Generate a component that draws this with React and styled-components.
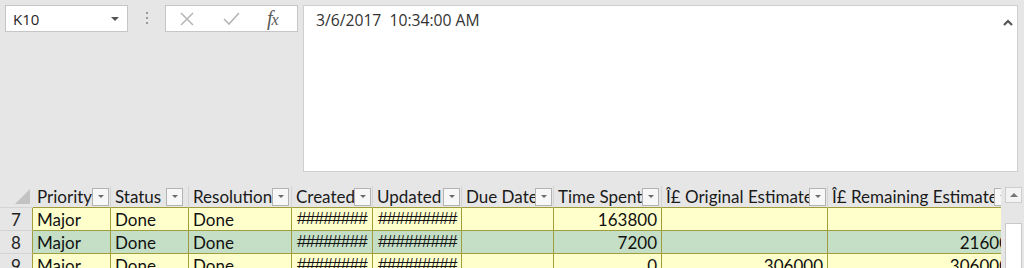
import React from 'react';
import styled, { createGlobalStyle } from 'styled-components';

const GlobalStyle = createGlobalStyle`
    body {
        margin: 0;
        background: #e6e6e6;
    }
`;

const OLIVE = '#a09e3c';

const Window = styled.div`
    width: 1024px;
    height: 268px;
    overflow: hidden;
    background: #e6e6e6;
    color: #1f1f1f;
`;

const FormulaBar = styled.div`
    display: flex;
    align-items: flex-start;
    padding: 5px 6px 0 5px;
    font-family: "Open Sans", "Noto Sans", sans-serif;
    font-size: 15px;
`;

const NameBox = styled.div`
    box-sizing: border-box;
    width: 123px;
    height: 27px;
    display: flex;
    align-items: center;
    justify-content: space-between;
    padding: 0 8px 0 7px;
    background: #fff;
    border: 1px solid #c6c6c6;
`;

const Caret = styled.span`
    width: 0;
    height: 0;
    border-left: 4px solid transparent;
    border-right: 4px solid transparent;
    border-top: 4px solid #555;
`;

const Grip = styled.div`
    width: 37px;
    display: flex;
    flex-direction: column;
    align-items: center;
    gap: 3px;
    padding-top: 7px;
    & > i {
        width: 2px;
        height: 2px;
        background: #9a9a9a;
    }
`;

const FuncBox = styled.div`
    box-sizing: border-box;
    width: 133px;
    height: 27px;
    display: flex;
    align-items: center;
    padding-left: 14px;
    background: #fff;
    border: 1px solid #c6c6c6;
`;

const FuncIcon = styled.svg`
    flex-shrink: 0;
    margin-right: ${p => p.$gap}px;
`;

const Fx = styled.span`
    font-family: "Liberation Serif", serif;
    font-style: italic;
    font-size: 20px;
    line-height: 1;
    color: #5a5a5a;
    letter-spacing: -1px;
    margin-top: -2px;
    & > small {
        font-size: 16px;
    }
`;

const FormulaInput = styled.div`
    box-sizing: border-box;
    flex: 1;
    height: 167px;
    margin-left: 5px;
    display: flex;
    justify-content: space-between;
    align-items: flex-start;
    padding: 3px 4px 0 12px;
    background: #fff;
    border: 1px solid #cfcfcf;
`;

const Value = styled.span`
    white-space: pre;
    font-size: 15.7px;
    color: #333;
`;

const SheetArea = styled.div`
    display: flex;
    margin-top: 14px;
    font-family: Lato, "Liberation Sans", sans-serif;
    font-size: 17px;
`;

const Grid = styled.div`
    width: 1001px;
    overflow: hidden;
    flex-shrink: 0;
`;

const Row = styled.div`
    display: flex;
    background: ${p => p.$tone === 'green' ? '#c4dfc5' : p.$tone === 'yellow' ? '#ffffcc' : '#e6e6e6'};
`;

const Corner = styled.div`
    box-sizing: border-box;
    width: 33px;
    height: 22px;
    flex-shrink: 0;
    display: flex;
    align-items: flex-end;
    justify-content: flex-end;
    padding: 0 3px 3px 0;
    border-bottom: 1px solid #d4d4d4;
    &::after {
        content: '';
        width: 0;
        height: 0;
        border-left: 15px solid transparent;
        border-bottom: 15px solid #c2c2c2;
    }
`;

const HeaderCell = styled.div`
    box-sizing: border-box;
    width: ${p => p.$w}px;
    height: 22px;
    flex-shrink: 0;
    display: flex;
    align-items: center;
    padding-left: 4px;
    border-right: 1px solid #d4d4d4;
    border-bottom: 1px solid ${OLIVE};
`;

const Label = styled.span`
    flex: 1;
    min-width: 0;
    overflow: hidden;
    white-space: nowrap;
    color: #1a1a1a;
`;

const FilterBtn = styled.span`
    box-sizing: border-box;
    width: 17px;
    height: 18px;
    flex-shrink: 0;
    margin-right: ${p => p.$gap}px;
    display: flex;
    align-items: center;
    justify-content: center;
    background: #f7f7f7;
    border: 1px solid #b3b3b3;
    &::after {
        content: '';
        width: 0;
        height: 0;
        border-left: 3px solid transparent;
        border-right: 3px solid transparent;
        border-top: 3px solid #6a6a6a;
    }
`;

const RowHead = styled.div`
    box-sizing: border-box;
    width: 33px;
    height: 23px;
    flex-shrink: 0;
    display: flex;
    align-items: center;
    justify-content: center;
    background: #e6e6e6;
    border-bottom: 1px solid #d4d4d4;
    border-right: 1px solid ${OLIVE};
    color: #222;
`;

const Cell = styled.div`
    box-sizing: border-box;
    width: ${p => p.$w}px;
    height: 23px;
    flex-shrink: 0;
    display: flex;
    align-items: center;
    justify-content: ${p => p.$num ? 'flex-end' : 'flex-start'};
    padding: 0 4px 0 ${p => p.$hash ? 5 : 4}px;
    border-right: 1px solid ${OLIVE};
    border-bottom: 1px solid ${OLIVE};
    white-space: nowrap;
    overflow: hidden;
    color: #111;
    ${p => p.$hash && `
        font-family: "Liberation Sans", sans-serif;
        font-size: 17px;
        letter-spacing: -0.7px;
    `}
`;

const VScroll = styled.div`
    flex: 1;
    display: flex;
    flex-direction: column;
    padding: 1px 2px 0 4px;
`;

const ScrollBtn = styled.div`
    box-sizing: border-box;
    width: 17px;
    height: 16px;
    display: flex;
    align-items: center;
    justify-content: center;
    background: #f3f3f3;
    border: 1px solid #cdcdcd;
    &::after {
        content: '';
        width: 0;
        height: 0;
        border-left: 4px solid transparent;
        border-right: 4px solid transparent;
        border-bottom: 4px solid #777;
    }
`;

const Thumb = styled.div`
    box-sizing: border-box;
    width: 17px;
    height: 60px;
    margin-top: 20px;
    background: #fff;
    border: 1px solid #c9c9c9;
`;

const columns = [
    { title: 'Priority', w: 78, gap: 1 },
    { title: 'Status', w: 78, gap: 5 },
    { title: 'Resolution', w: 103, gap: 2 },
    { title: 'Created', w: 81, gap: 1 },
    { title: 'Updated', w: 89, gap: 1 },
    { title: 'Due Date', w: 92, gap: 1 },
    { title: 'Time Spent', w: 108, gap: 2 },
    { title: 'Î£ Original Estimate', w: 166, gap: 1 },
    { title: 'Î£ Remaining Estimate', w: 186, gap: 2 },
];

const numCols = [6, 7, 8];
const hashCols = [3, 4];

const rows = [
    { n: 7, tone: 'yellow', cells: ['Major', 'Done', 'Done', '########', '#########', '', '163800', '', ''] },
    { n: 8, tone: 'green', cells: ['Major', 'Done', 'Done', '########', '#########', '', '7200', '', '21600'] },
    { n: 9, tone: 'yellow', cells: ['Major', 'Done', 'Done', '########', '#########', '', '0', '306000', '306000'] },
];

const App = () => {
    return (
        <Window>
            <GlobalStyle />
            <FormulaBar>
                <NameBox>
                    <span>K10</span>
                    <Caret />
                </NameBox>
                <Grip><i /><i /><i /></Grip>
                <FuncBox>
                    <FuncIcon $gap={29} width="14" height="14" viewBox="0 0 14 14">
                        <path d="M1 1 L13 13 M13 1 L1 13" stroke="#b5b5b5" strokeWidth="1.5" fill="none" />
                    </FuncIcon>
                    <FuncIcon $gap={27} width="17" height="13" viewBox="0 0 17 13">
                        <path d="M1 7 L6 12 L16 1" stroke="#b5b5b5" strokeWidth="1.6" fill="none" />
                    </FuncIcon>
                    <Fx>f<small>x</small></Fx>
                </FuncBox>
                <FormulaInput>
                    <Value>3/6/2017  10:34:00 AM</Value>
                    <svg width="10" height="7" viewBox="0 0 10 7" style={{ marginTop: 10 }}>
                        <path d="M1 6 L5 2 L9 6" stroke="#555" strokeWidth="2.2" fill="none" />
                    </svg>
                </FormulaInput>
            </FormulaBar>
            <SheetArea>
                <Grid>
                    <Row>
                        <Corner />
                        {columns.map(c => (
                            <HeaderCell key={c.title} $w={c.w}>
                                <Label>{c.title}</Label>
                                <FilterBtn $gap={c.gap} />
                            </HeaderCell>
                        ))}
                    </Row>
                    {rows.map(r => (
                        <Row key={r.n} $tone={r.tone}>
                            <RowHead>{r.n}</RowHead>
                            {r.cells.map((v, i) => (
                                <Cell
                                    key={i}
                                    $w={columns[i].w}
                                    $num={numCols.includes(i)}
                                    $hash={hashCols.includes(i)}
                                >
                                    {v}
                                </Cell>
                            ))}
                        </Row>
                    ))}
                </Grid>
                <VScroll>
                    <ScrollBtn />
                    <Thumb />
                </VScroll>
            </SheetArea>
        </Window>
    );
};

export default App;
